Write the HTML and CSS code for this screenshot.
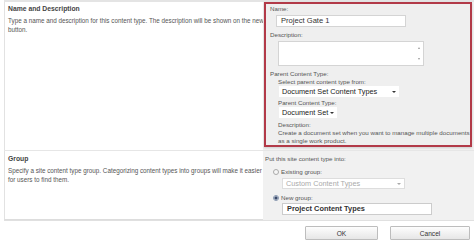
FILE: index.html
```html
<!DOCTYPE html>
<html>
<head>
<meta charset="utf-8">
<link rel="stylesheet" href="styles.css">
</head>
<body>
<div class="page">
  <section class="row row-name">
    <div class="desc">
      <h3 class="title">Name and Description</h3>
      <p class="text">Type a name and description for this content type. The description will be shown on the new<br>button.</p>
    </div>
    <div class="ctrl">
      <div class="redbox">
        <div class="lbl">Name:</div>
        <div class="input name-input">Project Gate 1</div>
        <div class="lbl lbl-gap">Description:</div>
        <div class="textarea">
          <div class="scroll"><span class="up"></span><span class="down"></span></div>
        </div>
        <div class="lbl lbl-pct">Parent Content Type:</div>
        <div class="sub">
          <div class="lbl">Select parent content type from:</div>
          <div class="select sel-wide"><span>Document Set Content Types</span><i class="arr"></i></div>
          <div class="lbl lbl-gap2">Parent Content Type:</div>
          <div class="select sel-small"><span>Document Set</span><i class="arr"></i></div>
          <div class="lbl lbl-gap3">Description:</div>
          <div class="lbl">Create a document set when you want to manage multiple documents<br>as a single work product.</div>
        </div>
      </div>
    </div>
  </section>
  <section class="row row-group">
    <div class="desc desc-group">
      <h3 class="title">Group</h3>
      <p class="text">Specify a site content type group. Categorizing content types into groups will make it easier<br>for users to find them.</p>
    </div>
    <div class="ctrl ctrl-group">
      <div class="lbl">Put this site content type into:</div>
      <div class="radio-row"><span class="radio"></span><span class="lbl">Existing group:</span></div>
      <div class="select sel-disabled"><span>Custom Content Types</span><i class="arr"></i></div>
      <div class="radio-row"><span class="radio checked"></span><span class="lbl">New group:</span></div>
      <div class="input group-input">Project Content Types</div>
    </div>
  </section>
  <div class="buttons">
    <button class="btn btn-ok">OK</button>
    <button class="btn btn-cancel">Cancel</button>
  </div>
</div>
</body>
</html>
```
FILE: styles.css
```css
html, body { margin: 0; padding: 0; background: #fff; }
body { width: 474px; height: 248px; overflow: hidden; font-family: "Liberation Sans", Arial, sans-serif; font-size: 6.2px; color: #555; }
.page { margin-left: 4px; border-top: 2px solid #e4e4e4; }
.row { display: flex; }
.row-name { height: 148px; }
.desc { width: 259px; flex: none; border-left: 1px solid #e2e2e2; padding: 2px 0 0 3px; box-sizing: border-box; }
.title { margin: 0; font-size: 6.8px; font-weight: bold; color: #444; line-height: 10px; }
.text { margin: 2px 0 0; line-height: 9px; color: #555; white-space: nowrap; font-size: 6.3px; }
.ctrl { flex: 1; background: #f1f1f1; }
.redbox { margin: 0 3px 0 1px; height: 145px; box-sizing: border-box; border: 2px solid #b23a48; background: #efefef; padding: 1px 0 0 4px; box-shadow: 0 1px 2px rgba(0,0,0,0.15); }
.lbl { line-height: 8px; color: #555; white-space: nowrap; }
.input { background: #fff; border: 1px solid #d4d4d4; font-size: 7.6px; color: #333; box-sizing: border-box; white-space: nowrap; }
.name-input { margin: 2px 0 0 6px; width: 130px; height: 12px; line-height: 10px; padding-left: 4px; }
.lbl-gap { margin-top: 4px; }
.textarea { margin: 2px 0 0 8px; width: 146px; height: 25px; background: #fff; border: 1px solid #d4d4d4; box-sizing: border-box; position: relative; }
.scroll { position: absolute; right: 0; top: 0; bottom: 0; width: 6px; }
.scroll .up, .scroll .down { position: absolute; left: 1px; width: 0; height: 0; border-left: 1.5px solid transparent; border-right: 1.5px solid transparent; }
.scroll .up { top: 5px; border-bottom: 2px solid #999; }
.scroll .down { bottom: 5px; border-top: 2px solid #999; }
.lbl-pct { margin-top: 4px; }
.sub { padding-left: 8px; margin-top: 0; }
.select { display: flex; align-items: center; justify-content: space-between; height: 11px; box-sizing: border-box; background: #fff; font-size: 7.3px; color: #222; padding: 0 3px; white-space: nowrap; }
.sel-wide { width: 120px; margin: 0 0 0 1px; }
.sel-small { width: 58px; margin-left: 1px; }
.arr { flex: none; width: 0; height: 0; border-left: 2px solid transparent; border-right: 2px solid transparent; border-top: 2.5px solid #333; }
.lbl-gap2 { margin-top: 2px; }
.lbl-gap3 { margin-top: 3px; }
.desc-group { border-bottom: 1px solid #ddd; padding-top: 3px; }
.row-group { height: 69px; border-top: 1px solid #e6e6e6; }
.ctrl-group { padding: 4px 0 0 2px; }
.radio-row { display: flex; align-items: center; margin: 5px 0 0 8px; }
.radio { width: 6px; height: 6px; border-radius: 50%; border: 1px solid #aaa; background: #f6f6f6; margin-right: 2px; box-sizing: border-box; }
.radio.checked { background: radial-gradient(circle, #3a4a6a 0 1.4px, #e8ecf2 1.8px); border-color: #8898b0; }
.sel-disabled { width: 123px; margin: 2px 0 0 17px; border: 1px solid #ddd; color: #aaa; }
.sel-disabled .arr { border-top-color: #aaa; }
.group-input { margin: 1px 0 0 17px; width: 150px; height: 12px; line-height: 10px; padding-left: 4px; font-weight: bold; font-size: 7.4px; color: #333; border-color: #ccc; }
.buttons { display: flex; justify-content: flex-end; gap: 12px; padding: 5px 4px 0 0; border-top: 1px solid #e0e0e0; }
.btn { height: 14px; padding: 0; font-family: inherit; font-size: 6.6px; color: #333; background: linear-gradient(#fdfdfd, #e6e6e6); border: 1px solid #bdbdbd; border-radius: 1px; }
.btn-ok { width: 73px; }
.btn-cancel { width: 80px; }
```
